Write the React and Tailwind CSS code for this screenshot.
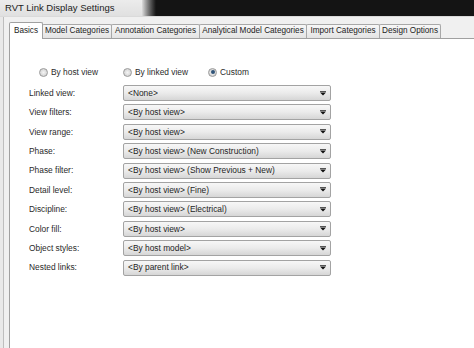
import React from "react";

const tabs = [
  { label: "Basics", w: "w-[34px]", active: true },
  { label: "Model Categories", w: "w-[70px]" },
  { label: "Annotation Categories", w: "w-[89px]" },
  { label: "Analytical Model Categories", w: "w-[108px]" },
  { label: "Import Categories", w: "w-[74px]" },
  { label: "Design Options", w: "w-[62px]" },
];

const rows = [
  ["Linked view:", "<None>"],
  ["View filters:", "<By host view>"],
  ["View range:", "<By host view>"],
  ["Phase:", "<By host view> (New Construction)"],
  ["Phase filter:", "<By host view> (Show Previous + New)"],
  ["Detail level:", "<By host view> (Fine)"],
  ["Discipline:", "<By host view> (Electrical)"],
  ["Color fill:", "<By host view>"],
  ["Object styles:", "<By host model>"],
  ["Nested links:", "<By parent link>"],
];

const Radio = ({ label, checked, w }) => (
  <div className={`flex items-center gap-[3px] ${w}`}>
    <span className="w-[9px] h-[9px] rounded-full border border-[#9a9a9a] bg-radial from-[#f4f4f4] to-[#c9c9c9] flex items-center justify-center">
      {checked && <span className="w-[4px] h-[4px] rounded-full bg-[#2f5378]" />}
    </span>
    <span className="text-[8.4px] text-[#2a2a2a] leading-none">{label}</span>
  </div>
);

const Combo = ({ value }) => (
  <div className="w-[208px] h-[16px] flex items-center justify-between pl-[4px] pr-[4px] rounded-[2px] border border-[#a3a3a3] bg-linear-to-b from-[#f7f7f7] via-[#ebebeb] to-[#d6d6d6]">
    <span className="text-[8.4px] text-[#1e1e1e] leading-none whitespace-nowrap">{value}</span>
    <svg width="6" height="5" viewBox="0 0 6 5">
      <rect x="0" y="0" width="6" height="1" fill="#555" />
      <path d="M0 1.5 L6 1.5 L3 4.5 Z" fill="#111" />
    </svg>
  </div>
);

const App = () => {
  return (
    <div className="w-[474px] h-[348px] overflow-hidden flex flex-col bg-[#e9e9e9] font-['Liberation_Sans',Arial,sans-serif]">
      {/* Title bar */}
      <div className="flex h-[16px] shrink-0">
        <div className="w-[142px] bg-linear-to-b from-[#ececec] to-[#e0e0e0] pl-[5px] flex items-center">
          <span className="text-[9.5px] text-[#1b1b1b] leading-none">RVT Link Display Settings</span>
        </div>
        <div className="w-[14px] bg-linear-to-r from-[#dcdcdc] to-[#141414]" />
        <div className="flex-1 bg-[#141414]" />
      </div>

      {/* Window body */}
      <div className="flex-1 flex flex-col pl-[3px] border-t border-[#dadada]">
        <div className="flex-1 flex flex-col border-l border-[#bebebe] bg-[#f0f0f0] pl-[5px] pt-[5px]">
          {/* Tabs */}
          <div className="flex items-end h-[16px] shrink-0">
            {tabs.map((t) =>
              t.active ? (
                <div
                  key={t.label}
                  className={`${t.w} h-[17px] -mb-px relative z-10 bg-white border border-b-0 border-[#a0a0a0] rounded-t-[2px] flex items-center justify-center`}
                >
                  <span className="text-[8.2px] text-[#222] leading-none">{t.label}</span>
                </div>
              ) : (
                <div
                  key={t.label}
                  className={`${t.w} h-[14px] -ml-px bg-linear-to-b from-[#f7f7f7] to-[#e3e3e3] border border-b-0 border-[#a8a8a8] rounded-t-[2px] flex items-center justify-center`}
                >
                  <span className="text-[8.2px] text-[#222] leading-none whitespace-nowrap">{t.label}</span>
                </div>
              )
            )}
          </div>

          {/* Panel */}
          <div className="flex-1 bg-white border-l border-t border-[#a0a0a0] pt-[28px]">
            <div className="flex items-center h-[10px] pl-[29px]">
              <Radio label="By host view" w="w-[84px]" />
              <Radio label="By linked view" w="w-[85px]" />
              <Radio label="Custom" checked />
            </div>

            <div className="flex flex-col gap-[3.4px] mt-[8px]">
              {rows.map(([label, value]) => (
                <div key={label} className="flex items-center">
                  <div className="w-[113px] pl-[19px] text-[8.4px] text-[#2a2a2a] leading-none">{label}</div>
                  <Combo value={value} />
                </div>
              ))}
            </div>
          </div>
        </div>
      </div>
    </div>
  );
};

export default App;
